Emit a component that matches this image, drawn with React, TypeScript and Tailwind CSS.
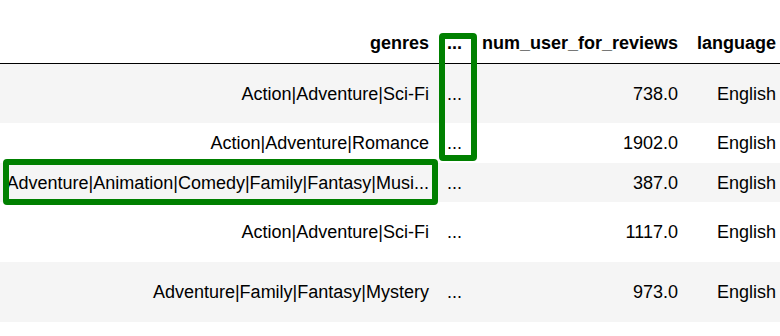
import React from "react";

type Row = { genres: string; num: string; lang: string; h: string; bg: string };

const rows: Row[] = [
  { genres: "Action|Adventure|Sci-Fi", num: "738.0", lang: "English", h: "h-[59px]", bg: "bg-[#f5f5f5]" },
  { genres: "Action|Adventure|Romance", num: "1902.0", lang: "English", h: "h-[40px]", bg: "bg-white" },
  { genres: "Adventure|Animation|Comedy|Family|Fantasy|Musi...", num: "387.0", lang: "English", h: "h-[39px]", bg: "bg-[#f5f5f5]" },
  { genres: "Action|Adventure|Sci-Fi", num: "1117.0", lang: "English", h: "h-[60px]", bg: "bg-white" },
  { genres: "Adventure|Family|Fantasy|Mystery", num: "973.0", lang: "English", h: "h-[60px]", bg: "bg-[#f5f5f5]" },
];

export default function App() {
  return (
    <div className="relative w-[780px] h-[336px] overflow-hidden bg-white text-black font-['Liberation_Sans',Arial,sans-serif] text-[18px] leading-[22px]">
      <div className="w-[800px]">
        <div className="flex h-[64px] items-end pb-[9px] font-bold border-b border-black">
          <div className="w-[438px] shrink-0 pr-[9px] text-right">genres</div>
          <div className="w-[33px] shrink-0 pl-[9px]">...</div>
          <div className="w-[216px] shrink-0 pr-[9px] text-right">num_user_for_reviews</div>
          <div className="w-[98px] shrink-0 pr-[9px] text-right">language</div>
        </div>
        {rows.map((r, i) => (
          <div key={i} className={`flex items-center ${r.h} ${r.bg}`}>
            <div className="w-[438px] shrink-0 pr-[9px] text-right whitespace-nowrap overflow-hidden flex justify-end">
              <span className="whitespace-nowrap">{r.genres}</span>
            </div>
            <div className="w-[33px] shrink-0 pl-[9px]">...</div>
            <div className="w-[216px] shrink-0 pr-[9px] text-right">{r.num}</div>
            <div className="w-[98px] shrink-0 pr-[9px] text-right">{r.lang}</div>
          </div>
        ))}
      </div>
      <div className="absolute left-[439px] top-[33px] w-[38px] h-[128px] border-[6px] border-[#008000] rounded-[4px]" />
      <div className="absolute left-[3px] top-[159px] w-[435px] h-[46px] border-[6px] border-[#008000] rounded-[4px]" />
    </div>
  );
}
